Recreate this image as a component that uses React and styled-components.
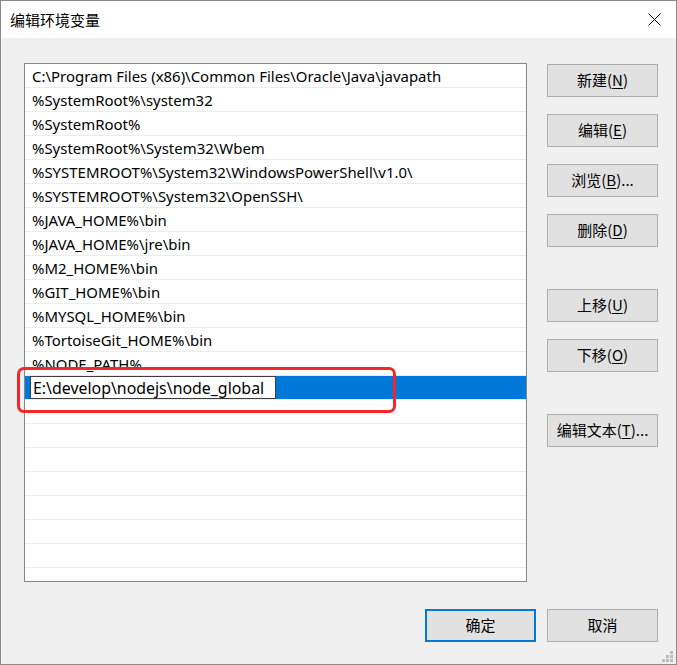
import styled, { createGlobalStyle } from "styled-components"

const GlobalStyle = createGlobalStyle`
  html, body {
    margin: 0;
    padding: 0;
    background: #f0f0f0;
  }
  * {
    box-sizing: border-box;
  }
`

const WindowStyled = styled.div`
  width: 677px;
  height: 665px;
  border: 1px solid #8a8a8a;
  background: #f0f0f0;
  display: flex;
  flex-direction: column;
  font-family: "Noto Sans", "Noto Sans CJK SC", sans-serif;
  color: #000;
  position: relative;
`

const TitleBarStyled = styled.div`
  height: 37px;
  background: #fff;
  display: flex;
  align-items: center;
  justify-content: space-between;
  padding: 0 15px 0 9px;
  font-family: "Noto Sans CJK SC", sans-serif;
  font-size: 15px;
  line-height: 1;
`

const CloseButtonStyled = styled.button`
  width: 14px;
  height: 14px;
  padding: 0;
  border: none;
  background: transparent;
  display: flex;
  align-items: center;
  justify-content: center;
`

const BodyStyled = styled.div`
  flex: 1;
  display: flex;
  flex-direction: column;
  padding: 25px 18px 0 23px;
`

const MainRowStyled = styled.div`
  display: flex;
  gap: 20px;
`

const ListWrapStyled = styled.div`
  position: relative;
  width: 503px;
  height: 519px;
`

const ListStyled = styled.div`
  width: 100%;
  height: 100%;
  border: 1px solid #828790;
  background: #fff;
  overflow: hidden;
`

const RowStyled = styled.div`
  height: 24px;
  line-height: 23px;
  padding-left: ${p => (p.$selected ? "5px" : "7px")};
  padding-top: ${p => (p.$selected ? "0" : "2px")};
  border-bottom: 1px solid #ececec;
  background: ${p => (p.$selected ? "#0078d7" : "#fff")};
  font-size: 14.95px;
  white-space: nowrap;
  display: flex;
  align-items: center;
`

const EditBoxStyled = styled.div`
  width: 246px;
  height: 23px;
  border: 1px solid #3c3c3c;
  background: #fff;
  padding: 1px 0 0 2px;
  line-height: 20px;
  font-size: 15.9px;
`

const HighlightStyled = styled.div`
  position: absolute;
  left: -7px;
  top: 304px;
  width: 379px;
  height: 46px;
  border: 3px solid #f3262a;
  border-radius: 7px;
  pointer-events: none;
`

const ButtonColumnStyled = styled.div`
  display: flex;
  flex-direction: column;
  padding-top: 1px;
  width: 111px;
`

const ButtonGroupStyled = styled.div`
  display: flex;
  flex-direction: column;
  gap: 17px;
  margin-top: ${p => p.$offset || 0}px;
`

const ButtonStyled = styled.button`
  width: 111px;
  height: 33px;
  background: #e1e1e1;
  border: ${p => (p.$primary ? "2px solid #0078d7" : "1px solid #adadad")};
  font-family: "Noto Sans CJK SC", sans-serif;
  font-size: 15px;
  color: #000;
  padding: 0 0 3px 0;
  display: flex;
  align-items: center;
  justify-content: center;
  & u {
    text-underline-offset: 2px;
  }
`

const FooterStyled = styled.div`
  display: flex;
  justify-content: flex-end;
  gap: 11px;
  margin-top: 27px;
`

const GripStyled = styled.svg`
  position: absolute;
  right: 3px;
  bottom: 2px;
`

const paths = [
  "C:\\Program Files (x86)\\Common Files\\Oracle\\Java\\javapath",
  "%SystemRoot%\\system32",
  "%SystemRoot%",
  "%SystemRoot%\\System32\\Wbem",
  "%SYSTEMROOT%\\System32\\WindowsPowerShell\\v1.0\\",
  "%SYSTEMROOT%\\System32\\OpenSSH\\",
  "%JAVA_HOME%\\bin",
  "%JAVA_HOME%\\jre\\bin",
  "%M2_HOME%\\bin",
  "%GIT_HOME%\\bin",
  "%MYSQL_HOME%\\bin",
  "%TortoiseGit_HOME%\\bin",
  "%NODE_PATH%",
]

const emptyRows = Array.from({ length: 8 })

const Label = ({ text, hotkey, tail = "" }) => (
  <span>
    {text}(<u>{hotkey}</u>){tail}
  </span>
)

const App = () => {
  return (
    <>
      <GlobalStyle />
      <WindowStyled>
        <TitleBarStyled>
          <span>编辑环境变量</span>
          <CloseButtonStyled aria-label="关闭">
            <svg width="13" height="13" viewBox="0 0 13 13">
              <path d="M0.5 0.5 L12.5 12.5 M12.5 0.5 L0.5 12.5" stroke="#000" strokeWidth="1" />
            </svg>
          </CloseButtonStyled>
        </TitleBarStyled>

        <BodyStyled>
          <MainRowStyled>
            <ListWrapStyled>
              <ListStyled>
                {paths.map(p => (
                  <RowStyled key={p}>{p}</RowStyled>
                ))}
                <RowStyled $selected>
                  <EditBoxStyled>E:\develop\nodejs\node_global</EditBoxStyled>
                </RowStyled>
                {emptyRows.map((_, i) => (
                  <RowStyled key={i} />
                ))}
              </ListStyled>
              <HighlightStyled />
            </ListWrapStyled>

            <ButtonColumnStyled>
              <ButtonGroupStyled>
                <ButtonStyled><Label text="新建" hotkey="N" /></ButtonStyled>
                <ButtonStyled><Label text="编辑" hotkey="E" /></ButtonStyled>
                <ButtonStyled><Label text="浏览" hotkey="B" tail="..." /></ButtonStyled>
                <ButtonStyled><Label text="删除" hotkey="D" /></ButtonStyled>
              </ButtonGroupStyled>
              <ButtonGroupStyled $offset={42}>
                <ButtonStyled><Label text="上移" hotkey="U" /></ButtonStyled>
                <ButtonStyled><Label text="下移" hotkey="O" /></ButtonStyled>
              </ButtonGroupStyled>
              <ButtonGroupStyled $offset={42}>
                <ButtonStyled><Label text="编辑文本" hotkey="T" tail="..." /></ButtonStyled>
              </ButtonGroupStyled>
            </ButtonColumnStyled>
          </MainRowStyled>

          <FooterStyled>
            <ButtonStyled $primary>确定</ButtonStyled>
            <ButtonStyled>取消</ButtonStyled>
          </FooterStyled>
        </BodyStyled>

        <GripStyled width="11" height="11" viewBox="0 0 11 11">
          <rect x="8" y="0" width="3" height="3" fill="#bcbcbc" />
          <rect x="4" y="4" width="3" height="3" fill="#bcbcbc" />
          <rect x="8" y="4" width="3" height="3" fill="#bcbcbc" />
          <rect x="0" y="8" width="3" height="3" fill="#bcbcbc" />
          <rect x="4" y="8" width="3" height="3" fill="#bcbcbc" />
          <rect x="8" y="8" width="3" height="3" fill="#bcbcbc" />
        </GripStyled>
      </WindowStyled>
    </>
  )
}

export default App
